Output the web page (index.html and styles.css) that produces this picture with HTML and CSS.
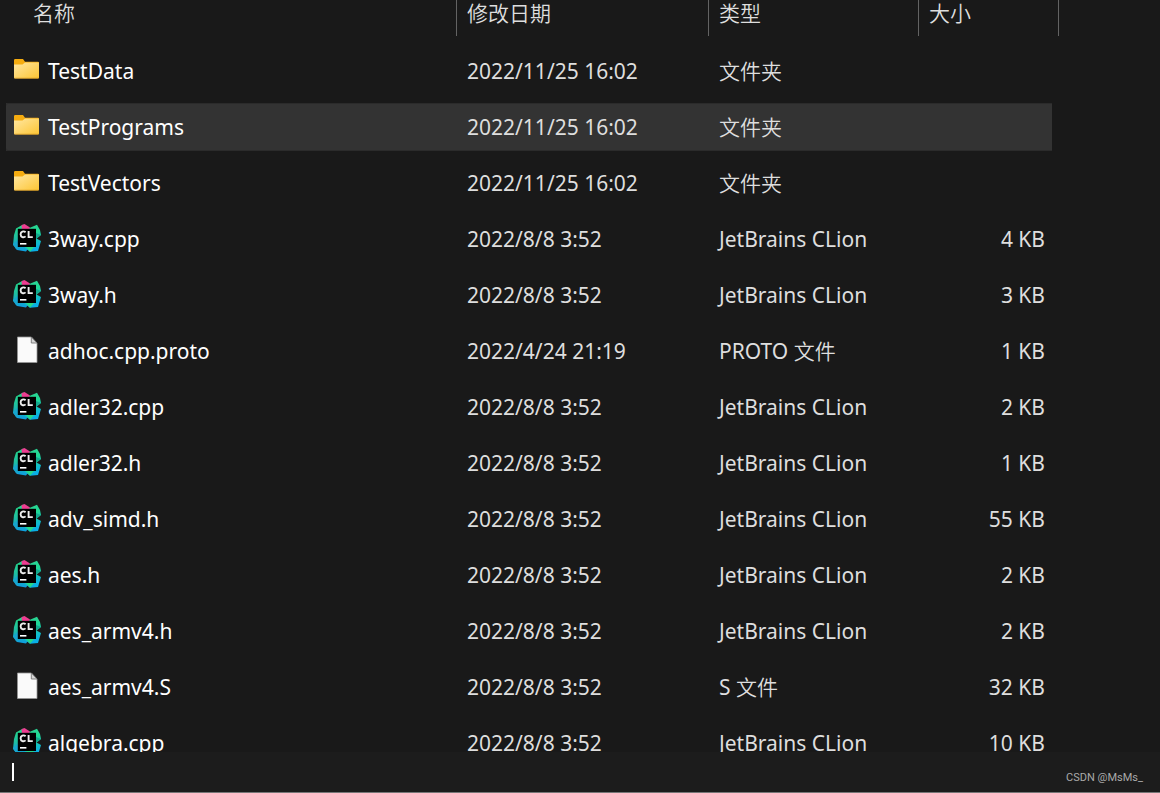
FILE: index.html
```html
<!DOCTYPE html>
<html lang="zh-CN">
<head>
<meta charset="utf-8">
<title>Files</title>
<link rel="stylesheet" href="styles.css">
</head>
<body>
<svg class="sprite" aria-hidden="true">
  <defs>
    <linearGradient id="fold" x1="0" y1="0" x2="1" y2="1"><stop offset="0" stop-color="#ffe7a2"/><stop offset="1" stop-color="#fdc533"/></linearGradient>
    <linearGradient id="left" x1="0.4" y1="0" x2="0.3" y2="1"><stop offset="0" stop-color="#25dc87"/><stop offset="0.5" stop-color="#20bfa0"/><stop offset="1" stop-color="#0b9ae8"/></linearGradient>
    <linearGradient id="right" x1="0" y1="0" x2="0.3" y2="1"><stop offset="0" stop-color="#31cf91"/><stop offset="0.45" stop-color="#1fd994"/><stop offset="1" stop-color="#09afe5"/></linearGradient>
    <symbol id="folder" viewBox="0 0 28 28">
      <path d="M1 4.2Q1 3 2.2 3H10l2 2.8h13q1 0 1 1V14H1z" fill="#f5ac10"/>
      <path d="M1 8.5h8.5l2.5-2h14v15q0 1-1 1H2q-1 0-1-1z" fill="url(#fold)"/>
      <path d="M1.5 22.2h24" stroke="#d99a20" stroke-width=".7"/>
    </symbol>
    <symbol id="clion" viewBox="0 0 28 28">
      <path d="M3 4.5L10 .5l6 3v20l-3 4-9-1.5L0 21l1-10z" fill="url(#left)"/>
      <path d="M14 5l3.5-1.5L24 .7l3 5.3L28 11l-4.5 3.5L28 17l-3 10-8 .8-5-3.8z" fill="url(#right)"/>
      <path d="M8.5 1.2L11.5 0l5.5 3.5-2 3H9z" fill="#ed3d91"/>
      <path d="M0 20l5-4v10l-2-1z" fill="#18a5ce"/>
      <path d="M13 23l8 0-4 4.8z" fill="#27d989"/>
      <path d="M23 9l5 2-5 4z" fill="#12a98c"/>
      <path d="M4.8 4.8H23V23H4.8z" fill="#000"/>
      <path d="M12.6 8.2c-2-1.7-5-.7-5 2.1s3 3.8 5 2.1M15.6 7v6.1h4.2" fill="none" stroke="#eee" stroke-width="1.9"/>
      <path d="M7 19.8h6.4" stroke="#fff" stroke-width="1.6"/>
    </symbol>
    <symbol id="file" viewBox="0 0 28 28">
      <path d="M4.5 1h13.8L24 7v19.5H4.5z" fill="#fafafa" stroke="#969696" stroke-width=".8"/>
      <path d="M18.3 1v6H24z" fill="#d5d5d5" stroke="#777" stroke-width=".9"/>
    </symbol>
  </defs>
</svg>
<main class="list">
<table class="files">
  <colgroup><col><col class="col-date"><col class="col-type"><col class="col-size"></colgroup>
  <thead><tr><th scope="col"><div class="head head-name">名称</div></th><th scope="col"><div class="head">修改日期</div></th><th scope="col"><div class="head">类型</div></th><th scope="col"><div class="head">大小</div></th></tr></thead>
  <tbody>
    <tr><td><div class="name"><svg class="icon"><use href="#folder"/></svg>TestData</div></td><td>2022/11/25 16:02</td><td><span class="han">文件夹</span></td><td></td></tr>
    <tr class="selected"><td><div class="name"><svg class="icon"><use href="#folder"/></svg>TestPrograms</div></td><td>2022/11/25 16:02</td><td><span class="han">文件夹</span></td><td></td></tr>
    <tr><td><div class="name"><svg class="icon"><use href="#folder"/></svg>TestVectors</div></td><td>2022/11/25 16:02</td><td><span class="han">文件夹</span></td><td></td></tr>
    <tr><td><div class="name"><svg class="icon"><use href="#clion"/></svg>3way.cpp</div></td><td>2022/8/8 3:52</td><td>JetBrains CLion</td><td>4 KB</td></tr>
    <tr><td><div class="name"><svg class="icon"><use href="#clion"/></svg>3way.h</div></td><td>2022/8/8 3:52</td><td>JetBrains CLion</td><td>3 KB</td></tr>
    <tr><td><div class="name"><svg class="icon"><use href="#file"/></svg>adhoc.cpp.proto</div></td><td>2022/4/24 21:19</td><td>PROTO <span class="han">文件</span></td><td>1 KB</td></tr>
    <tr><td><div class="name"><svg class="icon"><use href="#clion"/></svg>adler32.cpp</div></td><td>2022/8/8 3:52</td><td>JetBrains CLion</td><td>2 KB</td></tr>
    <tr><td><div class="name"><svg class="icon"><use href="#clion"/></svg>adler32.h</div></td><td>2022/8/8 3:52</td><td>JetBrains CLion</td><td>1 KB</td></tr>
    <tr><td><div class="name"><svg class="icon"><use href="#clion"/></svg>adv_simd.h</div></td><td>2022/8/8 3:52</td><td>JetBrains CLion</td><td>55 KB</td></tr>
    <tr><td><div class="name"><svg class="icon"><use href="#clion"/></svg>aes.h</div></td><td>2022/8/8 3:52</td><td>JetBrains CLion</td><td>2 KB</td></tr>
    <tr><td><div class="name"><svg class="icon"><use href="#clion"/></svg>aes_armv4.h</div></td><td>2022/8/8 3:52</td><td>JetBrains CLion</td><td>2 KB</td></tr>
    <tr><td><div class="name"><svg class="icon"><use href="#file"/></svg>aes_armv4.S</div></td><td>2022/8/8 3:52</td><td>S <span class="han">文件</span></td><td>32 KB</td></tr>
    <tr><td><div class="name"><svg class="icon"><use href="#clion"/></svg>algebra.cpp</div></td><td>2022/8/8 3:52</td><td>JetBrains CLion</td><td>10 KB</td></tr>
  </tbody>
</table>
</main>
<footer class="status"><span class="caret"></span><span class="credit">CSDN @MsMs_</span></footer>
</body>
</html>
```
FILE: styles.css
```css
* { box-sizing: border-box; }
body {
  margin: 0;
  height: 100vh;
  display: flex;
  flex-direction: column;
  overflow: hidden;
  background: #191919;
  color: #dedede;
  font: 21px/28px "Noto Sans", "Noto Sans CJK SC", sans-serif;
}
.sprite { position: absolute; width: 0; height: 0; }
.list {
  flex: 1;
  min-height: 0;
  overflow: hidden;
  padding: 0 101px 0 6px;
}
.files {
  width: 100%;
  table-layout: fixed;
  border-collapse: separate;
  border-spacing: 0;
}
.col-date { width: 252px; }
.col-type { width: 210px; }
.col-size { width: 141px; }
th {
  height: 43px;
  padding: 0;
  vertical-align: top;
  text-align: left;
  font-weight: 350;
  line-height: 26px;
}
.han { font-weight: 350; }
.head {
  height: 36px;
  padding-left: 10px;
  border-left: 1px solid #636363;
}
.head-name { border-left: 0; padding-left: 27px; }
th:last-child .head { border-right: 1px solid #636363; }
td {
  height: 56px;
  padding: 0 0 0 11px;
  border: 0 solid transparent;
  border-width: 4px 0;
  background-clip: padding-box;
  vertical-align: middle;
  white-space: nowrap;
  font-weight: 400;
}
td:first-child { padding-left: 7px; color: #fff; }
td:last-child {
  padding: 0 7px 0 0;
  border-right-width: 7px;
  text-align: right;
}
.selected td {
  background-color: #333;
  box-shadow: inset 0 1px #2b2b2b, inset 0 -1px #2b2b2b;
}
.selected td:first-child { border-radius: 2px 0 0 2px; }
.name { display: flex; align-items: center; gap: 7px; }
.icon { width: 28px; height: 28px; flex: none; margin-bottom: 3px; }
.status {
  height: 41px;
  flex: none;
  display: flex;
  align-items: center;
  justify-content: space-between;
  padding: 0 17px 0 12px;
  background: #1c1c1c;
  border-bottom: 1px solid #777;
}
.caret { width: 2px; height: 18px; background: #fff; }
.credit {
  padding-top: 12px;
  font: 11px/14px Roboto, sans-serif;
  color: #aaa;
}
```
